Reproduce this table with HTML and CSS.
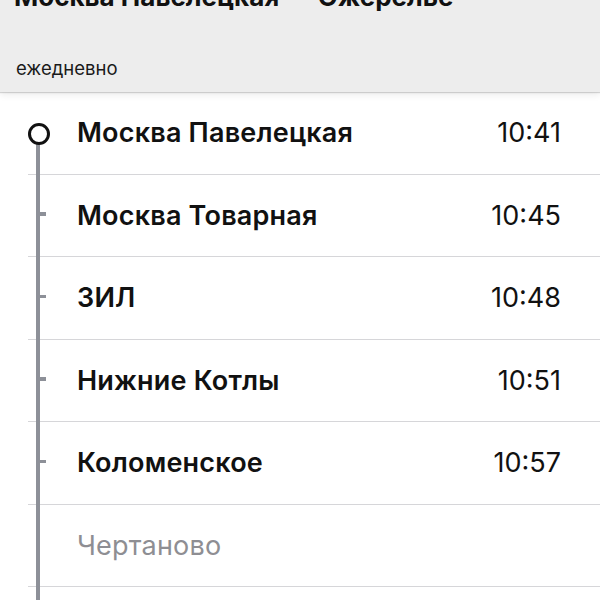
FILE: index.html
```html
<!DOCTYPE html>
<html lang="ru">
<head>
<meta charset="utf-8">
<link rel="stylesheet" href="styles.css">
</head>
<body>
<header class="header">
  <h1 class="title">Москва Павелецкая — Ожерелье</h1>
  <div class="days">ежедневно</div>
</header>
<ul class="stops">
  <li class="stop first"><span class="name">Москва Павелецкая</span><span class="time">10:41</span></li>
  <li class="stop"><span class="name">Москва Товарная</span><span class="time">10:45</span></li>
  <li class="stop"><span class="name">ЗИЛ</span><span class="time">10:48</span></li>
  <li class="stop"><span class="name">Нижние Котлы</span><span class="time">10:51</span></li>
  <li class="stop"><span class="name">Коломенское</span><span class="time">10:57</span></li>
  <li class="stop skip"><span class="name">Чертаново</span><span class="time"></span></li>
  <li class="stop skip" aria-hidden="true"></li>
</ul>
</body>
</html>
```

FILE: styles.css
```css
* { box-sizing: border-box; }
html, body {
  margin: 0;
  padding: 0;
  background: #fff;
  overflow: hidden;
  font-family: Inter, "Noto Sans", sans-serif;
  color: #111;
}
.header {
  position: relative;
  z-index: 2;
  display: flow-root;
  height: 92px;
  background: #ededed;
  padding: 0 16px;
  box-shadow: 0 1px 1px rgba(0,0,0,0.15), 0 3px 7px rgba(0,0,0,0.08);
}
.title {
  margin: -18px 0 0 -2px;
  font-size: 26px;
  font-weight: 700;
  line-height: 30px;
  white-space: nowrap;
}
.days {
  margin-top: 44px;
  font-size: 18.5px;
  line-height: 24px;
  color: #1a1a1a;
}
.stops {
  list-style: none;
  margin: 0;
  padding: 0 0 0 28px;
}
.stop {
  position: relative;
  height: 82.5px;
  display: flex;
  align-items: center;
  justify-content: space-between;
  padding: 0 39px 0 49px;
  border-bottom: 1px solid #d6d6d9;
  font-size: 27px;
}
.stop::before {
  content: "";
  position: absolute;
  left: 7.5px;
  width: 4px;
  top: 0;
  bottom: -1px;
  background: #8d9098;
}
.stop::after {
  content: "";
  position: absolute;
  left: 11px;
  top: 50%;
  width: 7px;
  height: 3.5px;
  margin-top: -3px;
  background: #8d9098;
}
.stop.first::before { top: 45px; }
.stop.first::after {
  left: 0;
  top: 31px;
  margin: 0;
  width: 16px;
  height: 16px;
  border: 3px solid #111;
  border-radius: 50%;
  background: #fff;
}
.stop.skip::after { display: none; }
.name {
  font-weight: 600;
  letter-spacing: 0.2px;
  color: #111;
}
.time {
  font-weight: 400;
  color: #111;
}
.skip .name {
  font-weight: 400;
  color: #8e8e93;
}
```
